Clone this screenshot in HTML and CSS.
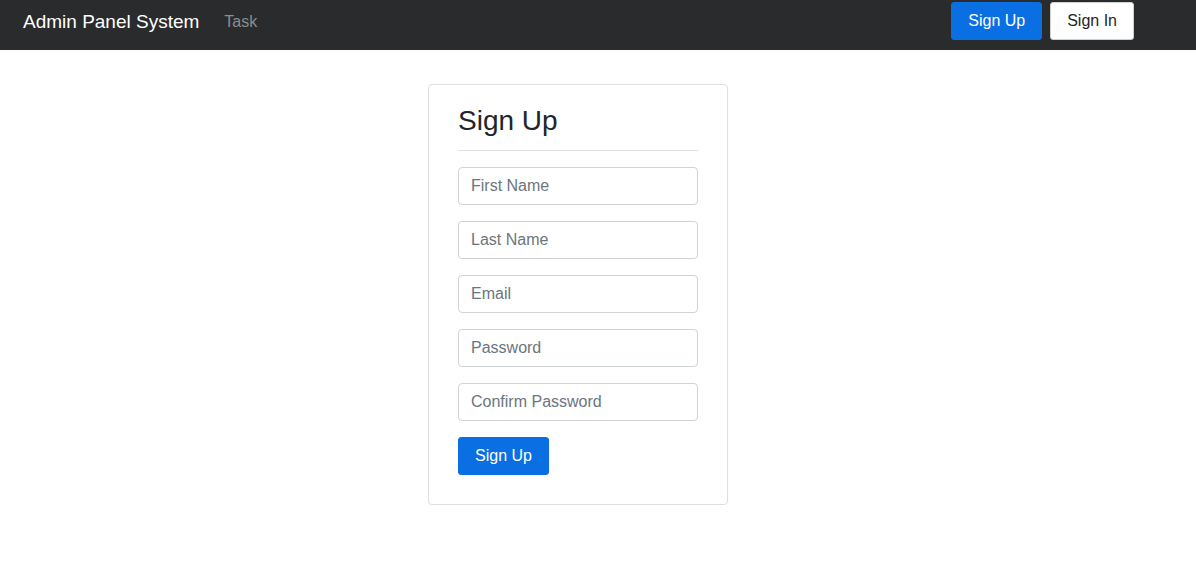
FILE: index.html
```html
<!DOCTYPE html>
<html lang="en">

<head>
    <meta charset="UTF-8">
    <title>Admin Panel System</title>
    <link rel="stylesheet" href="styles.css">
</head>

<body>
    <nav class="navbar">
        <a class="brand" href="#">Admin Panel System</a>
        <a class="nav-link" href="#">Task</a>
        <div class="nav-right">
            <button class="btn btn-primary">Sign Up</button>
            <button class="btn btn-light">Sign In</button>
        </div>
    </nav>

    <main class="page">
        <div class="card">
            <h2 class="card-title">Sign Up</h2>
            <hr class="divider">
            <form class="form">
                <input class="field" type="text" placeholder="First Name">
                <input class="field" type="text" placeholder="Last Name">
                <input class="field" type="email" placeholder="Email">
                <input class="field" type="password" placeholder="Password">
                <input class="field" type="password" placeholder="Confirm Password">
                <div>
                    <button class="btn btn-primary" type="button">Sign Up</button>
                </div>
            </form>
        </div>
    </main>
</body>

</html>
```
FILE: styles.css
```css
body {
    margin: 0;
    font-family: "Liberation Sans", Arial, sans-serif;
    color: #212529;
    background-color: #fff;
}

.navbar {
    display: flex;
    align-items: flex-start;
    height: 50px;
    box-sizing: border-box;
    padding: 0 62px 0 23px;
    background-color: #2a2b2d;
}

.brand {
    font-size: 19px;
    line-height: 44px;
    color: #fff;
    text-decoration: none;
    margin-right: 25px;
}

.nav-link {
    font-size: 16px;
    line-height: 44px;
    color: #8c8d8f;
    text-decoration: none;
}

.nav-right {
    margin-left: auto;
    display: flex;
    gap: 8px;
    padding-top: 2px;
}

.btn {
    font-family: inherit;
    font-size: 16px;
    height: 38px;
    padding: 0 16px;
    border-radius: 3px;
    border: 1px solid transparent;
    cursor: pointer;
}

.btn-primary {
    background-color: #0a6fe2;
    border-color: #0a6fe2;
    color: #fff;
}

.btn-light {
    background-color: #fff;
    border-color: #d0d0d0;
    color: #212529;
}

.page {
    padding: 34px 0 0 428px;
}

.card {
    width: 300px;
    box-sizing: border-box;
    border: 1px solid #dedfe0;
    border-radius: 4px;
    padding: 18px 29px 29px 29px;
    box-shadow: 0 1px 2px rgba(0, 0, 0, 0.04);
}

.card-title {
    font-size: 28px;
    font-weight: 400;
    margin: 0;
    line-height: 35px;
}

.divider {
    border: 0;
    border-top: 1px solid #e2e3e5;
    margin: 12px 0 16px 0;
}

.form {
    display: flex;
    flex-direction: column;
    gap: 16px;
}

.field {
    height: 38px;
    box-sizing: border-box;
    padding: 0 12px;
    border: 1px solid #ced4da;
    border-radius: 4px;
    font-family: inherit;
    font-size: 16px;
    color: #495057;
}

.field::placeholder {
    color: #6c757d;
}
```
